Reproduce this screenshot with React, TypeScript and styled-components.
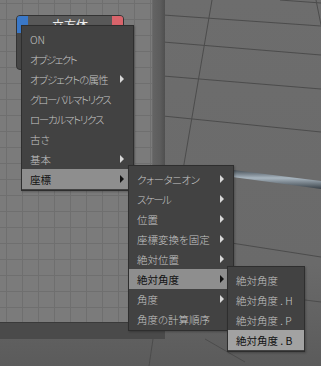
import React from "react";
import styled, { createGlobalStyle } from "styled-components";

const Global = createGlobalStyle`
  html, body { margin: 0; padding: 0; background: #6b6b6b; }
  body { font-family: "Noto Sans CJK JP", "Noto Sans", sans-serif; }
`;

const Screen = styled.div`
  position: relative;
  width: 321px;
  height: 366px;
  overflow: hidden;
  background: linear-gradient(to bottom, #6d6d6d 0%, #6a6a6a 72%, #5b5b5b 100%);
`;

const ViewportArt = styled.svg`
  position: absolute;
  inset: 0;
  z-index: 0;
`;

const EditorPanel = styled.div`
  position: relative;
  z-index: 1;
  width: 165px;
  height: 339px;
  display: grid;
  grid-template-columns: 152px 13px;
  grid-template-rows: 322px 17px;
`;

const Canvas = styled.div`
  position: relative;
  background-color: #7b7b7b;
  background-image: linear-gradient(to right, #6f6f6f 1px, transparent 1px),
    linear-gradient(to bottom, #6f6f6f 1px, transparent 1px);
  background-size: 16px 16px;
  background-position: 6px 3px;
`;

const Separator = styled.div`
  background: linear-gradient(to right, #636363, #5c5c5c 60%, #4f4f4f);
  border-left: 1px solid #6a6a6a;
`;

const BottomBar = styled.div`
  grid-column: 1 / 3;
  background: #4a4a4a;
  border-top: 1px solid #3a3a3a;
`;

const NodeBox = styled.div`
  position: absolute;
  left: 16px;
  top: 15px;
  width: 108px;
  height: 55px;
  box-sizing: border-box;
  background: #474747;
  border: 1px solid #333;
  border-radius: 4px;
  overflow: hidden;
`;

const NodeHeader = styled.div`
  height: 16px;
  display: grid;
  grid-template-columns: 11px 1fr 11px;
  background: #585858;
`;

const Port = styled.div<{ $color: string }>`
  background: ${(p) => p.$color};
`;

const NodeTitle = styled.div`
  color: #f0f0f0;
  font-size: 12px;
  line-height: 16px;
  text-align: center;
  margin-top: 1px;
`;

const Menu = styled.div<{ $left: number; $top: number; $width: number; $z: number }>`
  position: absolute;
  left: ${(p) => p.$left}px;
  top: ${(p) => p.$top}px;
  width: ${(p) => p.$width}px;
  z-index: ${(p) => p.$z};
  box-sizing: border-box;
  background: #424242;
  border: 1px solid #2e2e2e;
  padding: 3px 0 1px;
  box-shadow: 1px 1px 2px rgba(0, 0, 0, 0.25);
`;

type ItemState = "normal" | "open" | "hover";

const Item = styled.div<{ $state: ItemState; $tracking: number }>`
  height: 20px;
  display: flex;
  align-items: center;
  padding: 0 9px 0 8px;
  font-size: 10.5px;
  font-weight: ${(p) => (p.$state === "normal" ? 300 : 400)};
  letter-spacing: ${(p) => p.$tracking}px;
  font-feature-settings: "palt";
  white-space: nowrap;
  color: ${(p) => (p.$state === "normal" ? "#c6c6c6" : "#111111")};
  background: ${(p) =>
    p.$state === "open" ? "#8e8e8e" : p.$state === "hover" ? "#a2a2a2" : "transparent"};
`;

const Arrow = styled.span<{ $dark: boolean }>`
  margin-left: auto;
  width: 0;
  height: 0;
  border-left: 4px solid ${(p) => (p.$dark ? "#111" : "#d8d8d8")};
  border-top: 4px solid transparent;
  border-bottom: 4px solid transparent;
`;

type Entry = { label: string; sub?: boolean; state?: ItemState; tracking?: number };

const menu1: Entry[] = [
  { label: "ON" },
  { label: "オブジェクト", tracking: -1.5 },
  { label: "オブジェクトの属性", sub: true, tracking: -1 },
  { label: "グローバルマトリクス", tracking: -1.4 },
  { label: "ローカルマトリクス", tracking: -1.3 },
  { label: "古さ" },
  { label: "基本", sub: true },
  { label: "座標", sub: true, state: "open" },
];

const menu2: Entry[] = [
  { label: "クォータニオン", sub: true, tracking: -0.5 },
  { label: "スケール", sub: true, tracking: -1.5 },
  { label: "位置", sub: true },
  { label: "座標変換を固定", sub: true },
  { label: "絶対位置", sub: true },
  { label: "絶対角度", sub: true, state: "open" },
  { label: "角度", sub: true },
  { label: "角度の計算順序" },
];

const menu3: Entry[] = [
  { label: "絶対角度" },
  { label: "絶対角度 . H" },
  { label: "絶対角度 . P" },
  { label: "絶対角度 . B", state: "hover" },
];

function MenuList({ items }: { items: Entry[] }) {
  return (
    <>
      {items.map((it) => {
        const state = it.state ?? "normal";
        return (
          <Item key={it.label} $state={state} $tracking={it.tracking ?? 0}>
            {it.label}
            {it.sub && <Arrow $dark={state !== "normal"} />}
          </Item>
        );
      })}
    </>
  );
}

export default function App() {
  return (
    <>
      <Global />
      <Screen>
        <ViewportArt width="321" height="366" viewBox="0 0 321 366">
          <defs>
            <linearGradient id="rod" x1="0" y1="0" x2="0" y2="1">
              <stop offset="0" stopColor="#3c444b" />
              <stop offset="0.45" stopColor="#a9b6c0" />
              <stop offset="1" stopColor="#384047" />
            </linearGradient>
          </defs>
          <g stroke="#4c4c4c" strokeWidth="1" fill="none">
            <line x1="163" y1="15" x2="321" y2="26" />
            <line x1="163" y1="42" x2="321" y2="55" />
            <line x1="163" y1="76" x2="321" y2="89" />
            <line x1="163" y1="116" x2="321" y2="132" />
            <line x1="212" y1="0" x2="183" y2="170" />
            <line x1="280" y1="0" x2="321" y2="3" />
            <line x1="316" y1="0" x2="321" y2="25" />
            <line x1="225" y1="242" x2="321" y2="257" />
            <line x1="153" y1="339" x2="149" y2="366" />
            <line x1="205" y1="339" x2="245" y2="362" />
            <line x1="305" y1="300" x2="321" y2="302" />
          </g>
          <polygon points="225,169 321,181 321,189 225,176" fill="url(#rod)" />
        </ViewportArt>
        <EditorPanel>
          <Canvas>
            <NodeBox>
              <NodeHeader>
                <Port $color="#3a78c8" />
                <NodeTitle>立方体</NodeTitle>
                <Port $color="#d9646b" />
              </NodeHeader>
            </NodeBox>
          </Canvas>
          <Separator />
          <BottomBar />
        </EditorPanel>
        <Menu $left={21} $top={25} $width={113} $z={2}>
          <MenuList items={menu1} />
        </Menu>
        <Menu $left={128} $top={165} $width={106} $z={3}>
          <MenuList items={menu2} />
        </Menu>
        <Menu $left={227} $top={266} $width={78} $z={4}>
          <MenuList items={menu3} />
        </Menu>
      </Screen>
    </>
  );
}
